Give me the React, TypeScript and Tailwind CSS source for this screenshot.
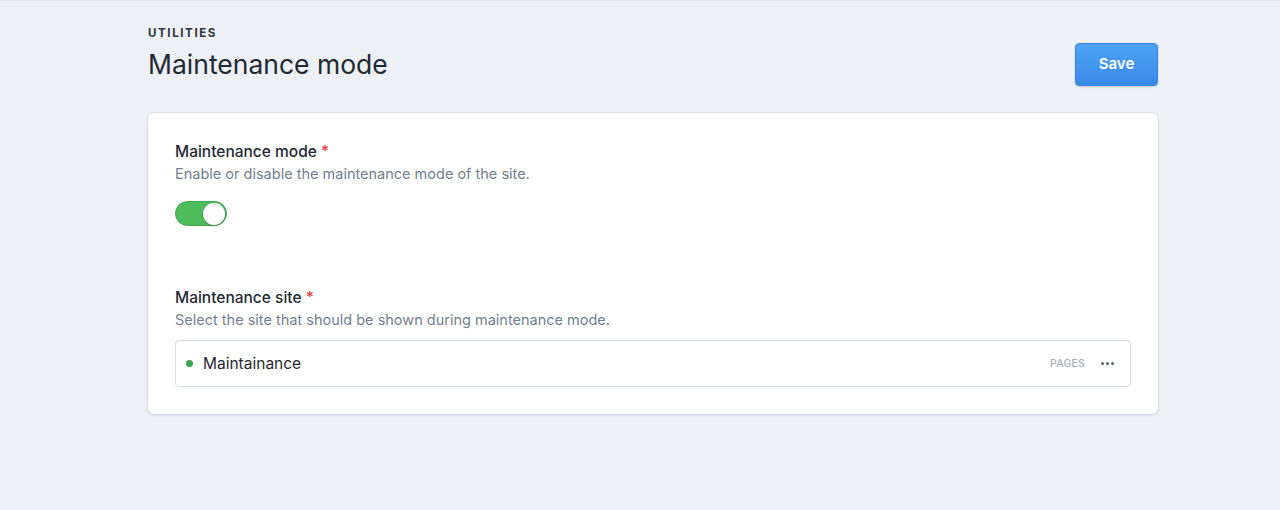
import React from "react";

export default function App() {
  return (
    <div className="min-h-[510px] w-full bg-[#edf0f5] font-['Inter',sans-serif] text-[#1f2933] border-t border-[#e3e7ec]">
      <div className="ml-[148px] w-[1010px] pt-[24px]">
        <div className="flex items-end justify-between">
          <div>
            <div className="text-[11.5px] font-bold uppercase tracking-[0.14em] leading-[16px] text-[#2b3440]">Utilities</div>
            <h1 className="mt-[6px] text-[26.5px] leading-[34px] font-normal text-[#1f2933]">Maintenance mode</h1>
          </div>
          <button className="mb-[-5px] h-[43px] w-[83px] rounded-[4px] border border-[#3a85dd] bg-gradient-to-b from-[#4da1f7] to-[#3a8be6] text-[15px] font-semibold text-white shadow-[0_1px_2px_rgba(0,0,0,0.15)]">
            Save
          </button>
        </div>

        <div className="mt-[32px] rounded-[6px] bg-white px-[27px] pt-[31px] pb-[27px] shadow-[0_0_0_1px_rgba(40,60,90,0.06),0_1px_3px_rgba(40,60,90,0.12)]">
          <div>
            <div className="text-[15.5px] leading-[16px] font-medium text-[#1f2933]">
              Maintenance mode <span className="text-[#e53e3e]">*</span>
            </div>
            <div className="mt-[5px] text-[14.5px] leading-[18px] text-[#737f8c]">Enable or disable the maintenance mode of the site.</div>
            <div className="mt-[18px] flex h-[25px] w-[52px] items-center justify-end rounded-full bg-[#4fbc5c] border border-[#43a54f] pr-[1px]">
              <div className="h-[22px] w-[22px] rounded-full bg-white shadow-[0_1px_2px_rgba(0,0,0,0.25)]" />
            </div>
          </div>

          <div className="mt-[64px]">
            <div className="text-[15.5px] leading-[16px] font-medium text-[#1f2933]">
              Maintenance site <span className="text-[#e53e3e]">*</span>
            </div>
            <div className="mt-[5px] text-[14.5px] leading-[18px] text-[#737f8c]">Select the site that should be shown during maintenance mode.</div>
            <div className="mt-[11px] flex h-[47px] items-center rounded-[4px] border border-[#d8dee5] bg-white pl-[10px] pr-[16px] shadow-[inset_0_1px_1px_rgba(0,0,0,0.03)]">
              <span className="h-[7px] w-[7px] rounded-full bg-[#3fa34d]" />
              <span className="ml-[10px] text-[15.5px] text-[#1f2933]">Maintainance</span>
              <span className="ml-auto text-[10.5px] font-medium uppercase tracking-[0.02em] text-[#a4adb8]">Pages</span>
              <span className="ml-[16px] flex items-center gap-[2px]">
                <span className="h-[3px] w-[3px] rounded-full bg-[#5a6573]" />
                <span className="h-[3px] w-[3px] rounded-full bg-[#5a6573]" />
                <span className="h-[3px] w-[3px] rounded-full bg-[#5a6573]" />
              </span>
            </div>
          </div>
        </div>
      </div>
    </div>
  );
}
